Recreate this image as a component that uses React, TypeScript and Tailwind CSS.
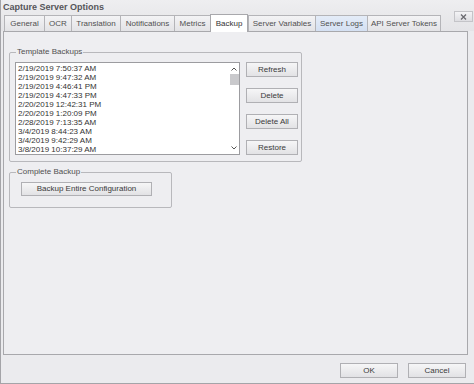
import React from "react";

const tabs = [
  { label: "General", w: "w-[40px]" },
  { label: "OCR", w: "w-[27px]" },
  { label: "Translation", w: "w-[49px]" },
  { label: "Notifications", w: "w-[54px]" },
  { label: "Metrics", w: "w-[36px]" },
  { label: "Backup", w: "w-[38px]", active: true },
  { label: "Server Variables", w: "w-[67px]" },
  { label: "Server Logs", w: "w-[52px]", hover: true },
  { label: "API Server Tokens", w: "w-[74px]", last: true },
];

const backups = [
  "2/19/2019 7:50:37 AM",
  "2/19/2019 9:47:32 AM",
  "2/19/2019 4:46:41 PM",
  "2/19/2019 4:47:33 PM",
  "2/20/2019 12:42:31 PM",
  "2/20/2019 1:20:09 PM",
  "2/28/2019 7:13:35 AM",
  "3/4/2019 8:44:23 AM",
  "3/4/2019 9:42:29 AM",
  "3/8/2019 10:37:29 AM",
];

function Btn({ label, className }: { label: string; className: string }) {
  return (
    <button
      className={
        "flex items-center justify-center border border-[#b0b0b4] bg-gradient-to-b from-[#f6f6f7] to-[#e2e2e5] text-[8px] text-[#3a3a3a] leading-none " +
        className
      }
    >
      {label}
    </button>
  );
}

export default function App() {
  return (
    <div
      className="w-[474px] h-[384px] bg-[#ebebee] border-l border-b border-[#a4a4a8] flex flex-col"
      style={{ fontFamily: '"Liberation Sans", Arial, sans-serif' }}
    >
      {/* Title + tabs */}
      <div className="relative bg-gradient-to-b from-[#eeeef0] to-[#e4e4e7]">
        <div className="h-[15px] flex items-center pl-[2px] text-[9px] font-bold text-[#55555a]">
          Capture Server Options
        </div>
        <div className="absolute top-[11px] right-[1px] w-[19px] h-[11px] border border-[#c4c4c8] bg-gradient-to-b from-[#f4f4f6] to-[#dedee2] flex items-center justify-center">
          <svg width="7" height="6" viewBox="0 0 7 6">
            <path d="M1 0.5 L6 5.5 M6 0.5 L1 5.5" stroke="#6a6a70" strokeWidth="1.3" />
          </svg>
        </div>
        <div className="h-[16px] flex items-end pl-[3px]">
          {tabs.map((t) =>
            t.active ? (
              <div
                key={t.label}
                className={
                  t.w +
                  " relative z-10 -mb-px h-[18px] bg-white border border-b-0 border-[#a8a8ac] flex items-center justify-center text-[8px] text-[#333]"
                }
              >
                {t.label}
              </div>
            ) : (
              <div
                key={t.label}
                className={
                  t.w +
                  " h-[16px] border-t border-l border-[#b4b4b8] flex items-center justify-center text-[8px] text-[#505050] " +
                  (t.last ? "border-r " : "") +
                  (t.hover
                    ? "bg-gradient-to-b from-[#e4ecf8] to-[#d4e0f2]"
                    : "bg-gradient-to-b from-[#f3f3f5] to-[#e3e3e6]")
                }
              >
                {t.label}
              </div>
            )
          )}
        </div>
      </div>

      {/* Panel */}
      <div className="ml-[2px] mr-[6px] h-[324px] bg-[#eeeef1] border border-[#a8a8ac] flex flex-col items-start pl-[5px] pt-[15px] gap-[5px]">
        <fieldset className="w-[293px] h-[115px] border border-[#b8b8bc] rounded-[2px]">
          <legend className="ml-[6px] px-[1px] h-[10px] leading-[10px] text-[8px] text-[#505050]">
            Template Backups
          </legend>
          <div className="flex mt-[5px] ml-[5px] gap-[6px]">
            <div className="w-[225px] h-[93px] bg-white border border-[#9c9ca0] flex">
              <div className="flex-1 pt-[1px] pl-[2px]">
                {backups.map((b) => (
                  <div key={b} className="h-[9px] leading-[9px] text-[8px] text-[#333] whitespace-nowrap">
                    {b}
                  </div>
                ))}
              </div>
              <div className="w-[10px] flex flex-col items-center bg-white">
                <div className="h-[11px] flex items-center justify-center">
                  <svg width="6" height="4" viewBox="0 0 6 4">
                    <path d="M0.5 3.5 L3 1 L5.5 3.5" stroke="#555" fill="none" strokeWidth="1" />
                  </svg>
                </div>
                <div className="w-[9px] h-[11px] bg-[#c9c9cc]" />
                <div className="flex-1" />
                <div className="h-[12px] flex items-center justify-center">
                  <svg width="6" height="4" viewBox="0 0 6 4">
                    <path d="M0.5 0.5 L3 3 L5.5 0.5" stroke="#555" fill="none" strokeWidth="1" />
                  </svg>
                </div>
              </div>
            </div>
            <div className="flex flex-col gap-[11px]">
              <Btn label="Refresh" className="w-[52px] h-[15px]" />
              <Btn label="Delete" className="w-[52px] h-[15px]" />
              <Btn label="Delete All" className="w-[52px] h-[15px]" />
              <Btn label="Restore" className="w-[52px] h-[15px]" />
            </div>
          </div>
        </fieldset>

        <fieldset className="w-[163px] h-[41px] border border-[#b8b8bc] rounded-[2px]">
          <legend className="ml-[6px] px-[1px] h-[10px] leading-[10px] text-[8px] text-[#505050]">
            Complete Backup
          </legend>
          <div className="mt-[5px] ml-[11px]">
            <Btn label="Backup Entire Configuration" className="w-[131px] h-[14px]" />
          </div>
        </fieldset>
      </div>

      {/* Footer */}
      <div className="flex-1 flex justify-end items-start pt-[8px] pr-[8px] gap-[10px]">
        <Btn label="OK" className="w-[58px] h-[15px]" />
        <Btn label="Cancel" className="w-[58px] h-[15px]" />
      </div>
    </div>
  );
}
